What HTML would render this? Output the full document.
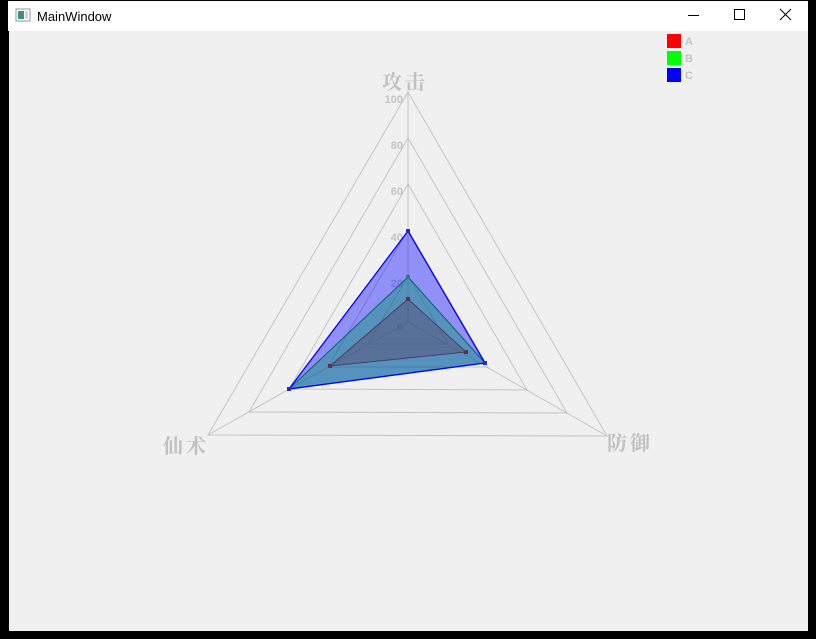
<!DOCTYPE html>
<html><head><meta charset="utf-8"><style>
body{margin:0;width:816px;height:639px;background:#000;position:relative;overflow:hidden;font-family:"Liberation Sans",sans-serif}
#tb{position:absolute;left:8px;top:1px;width:800px;height:30px;background:#fff}
#ct{position:absolute;left:9px;top:31px;width:799px;height:600px;background:#f0f0f0}
</style></head><body>
<div id="tb"></div>
<div id="ct"></div>
<svg width="816" height="639" style="position:absolute;left:0;top:0">
<rect x="16" y="9" width="14" height="12" fill="#fff" stroke="#8a9aa6"/><rect x="18" y="11" width="6" height="8" fill="#3f8f7f"/><rect x="25" y="11" width="3" height="8" fill="#cfd8dc"/>
<text x="37" y="21" font-family="Liberation Sans" font-size="13" fill="#000">MainWindow</text>
<line x1="688" y1="15.5" x2="699" y2="15.5" stroke="#000"/>
<rect x="734.5" y="9.5" width="10" height="10" fill="none" stroke="#000"/>
<path d="M780 9L791 20M791 9L780 20" stroke="#000"/>
<g fill="none" stroke="#c4c4c4" stroke-width="1">
<polygon points="408,92 607,436 208,435"/>
<polygon points="408,138 567,413 249,412"/>
<polygon points="408,184 527,390 289,389"/>
<polygon points="408,230 488,367 328,367"/>
<polygon points="408,276 448,344 368,344"/>
<line x1="408" y1="92" x2="408" y2="322"/>
<line x1="408" y1="322" x2="607" y2="436"/>
<line x1="408" y1="322" x2="208" y2="435"/>
</g>
<g font-family="Liberation Sans" font-size="11" font-weight="bold" fill="#c4c4c4" text-anchor="end">
<text x="403" y="103">100</text><text x="403" y="149">80</text><text x="403" y="195">60</text><text x="403" y="241">40</text><text x="403" y="287">20</text><text x="403" y="331">0</text>
</g>
<g font-family="'Liberation Serif','Noto Serif CJK SC',serif" font-size="20" font-weight="bold" fill="#c0c0c0" text-anchor="middle">
<text x="405" y="89" letter-spacing="3">攻击</text>
<text x="186" y="453" letter-spacing="3">仙术</text>
<text x="630" y="450" letter-spacing="3">防御</text>
</g>
<polygon points="408,299 466,352 330,366" fill="rgba(255,0,0,0.4)" stroke="#c00" stroke-width="1"/>
<polygon points="408,277 485,363 289,389" fill="rgba(0,255,0,0.4)" stroke="#0a0" stroke-width="1"/>
<polygon points="408,231 485,363 289,389" fill="rgba(0,0,255,0.4)" stroke="#00f" stroke-width="1.3"/>
<g fill="#2030c0">
<rect x="406" y="229" width="4" height="4"/><rect x="483" y="361" width="4" height="4"/><rect x="287" y="387" width="4" height="4"/>
<rect x="406" y="275" width="4" height="4" fill="#208080"/><rect x="406" y="297" width="4" height="4" fill="#603050"/><rect x="464" y="350" width="4" height="4" fill="#603050"/><rect x="328" y="364" width="4" height="4" fill="#603050"/>
</g>
<rect x="667" y="34" width="14" height="14" fill="#f00"/>
<rect x="667" y="51" width="14" height="14" fill="#0f0"/>
<rect x="667" y="68" width="14" height="14" fill="#00f"/>
<g font-family="Liberation Sans" font-size="11" font-weight="bold" fill="#c4c4c4">
<text x="685" y="45">A</text><text x="685" y="62">B</text><text x="685" y="79">C</text>
</g>
</svg>
</body></html>
